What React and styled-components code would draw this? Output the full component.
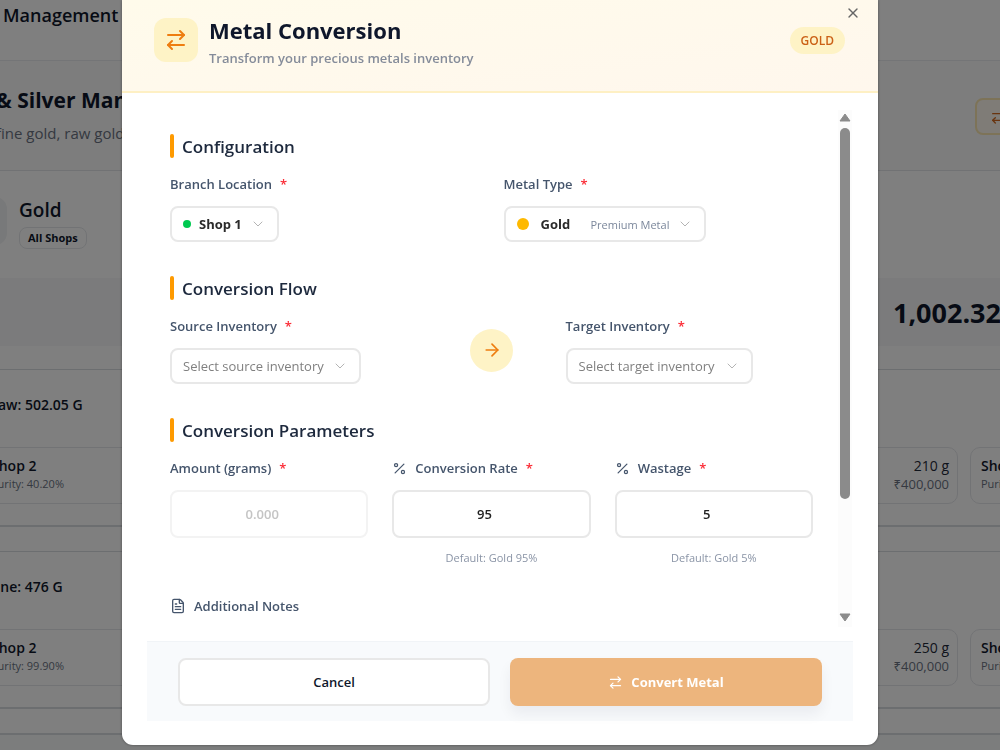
import React from 'react';
import styled, { createGlobalStyle } from 'styled-components';
import {
  ArrowRight,
  ArrowRightLeft,
  ChevronDown,
  FileText,
  Percent,
  X
} from 'lucide-react';

const GlobalStyle = createGlobalStyle`
  * {
    box-sizing: border-box;
  }

  body {
    margin: 0;
    font-family: 'Open Sans', 'Noto Sans', sans-serif;
    color: #0f172b;
    background: #fff;
  }

  h1, h2, h3, h4, p {
    margin: 0;
  }

  button, input, select {
    font-family: inherit;
  }
`;

const Screen = styled.div`
  height: 100vh;
  overflow: hidden;
`;

/* page behind the dialog */

const Page = styled.div`
  margin: 0 -240px 0 -20px;
`;

const TopBar = styled.header`
  height: 61px;
  padding: 2px 23px;
  border-bottom: 1px solid #e9ebee;
`;

const TopTitle = styled.h1`
  font-size: 18px;
  line-height: 26px;
  font-weight: 600;
`;

const Hero = styled.div`
  display: flex;
  justify-content: space-between;
  align-items: center;
  height: 110px;
  padding: 2px 240px 0 16px;
  background: #fafbfb;
  border-bottom: 1px solid #e2e4e8;
`;

const HeroTitle = styled.h2`
  font-size: 21px;
  line-height: 32px;
  font-weight: 700;
`;

const HeroText = styled.p`
  font-size: 15px;
  line-height: 34px;
  color: #6a7282;
  white-space: nowrap;
`;

const HeroButton = styled.button`
  display: flex;
  flex: none;
  align-items: center;
  width: 120px;
  height: 37px;
  margin-right: -95px;
  padding: 0 13px;
  color: #d2691e;
  background: #fef9ee;
  border: 2px solid #fbe7b0;
  border-radius: 8px;
`;

const Metal = styled.div`
  display: flex;
  gap: 12px;
  height: 107px;
  padding-top: 26px;
`;

const MetalIcon = styled.div`
  width: 27px;
  height: 48px;
  background: #f1f2f4;
  border-radius: 12px;
`;

const MetalName = styled.h3`
  font-size: 19px;
  line-height: 26px;
  font-weight: 600;
`;

const Tag = styled.span`
  display: block;
  margin-top: 4px;
  padding: 0 8px;
  font-size: 11px;
  line-height: 20px;
  font-weight: 700;
  border: 1px solid #e5e7eb;
  border-radius: 8px;
`;

const Total = styled.div`
  display: flex;
  align-items: center;
  justify-content: flex-end;
  height: 68px;
  margin-bottom: 23px;
  padding-right: 239px;
  font-size: 27px;
  font-weight: 700;
  background: #f6f7f8;
`;

const Stock = styled.section`
  height: 158px;
  margin-bottom: 24px;
  padding-top: 22px;
  border-top: 1px solid #d9dce0;
  border-bottom: 2px solid #d9dce0;
`;

const StockTitle = styled.h4`
  height: 55px;
  padding-left: 9px;
  font-size: 14px;
  line-height: 26px;
  font-weight: 600;
`;

const Shops = styled.div`
  display: grid;
  grid-template-columns: 1fr 270px;
  gap: 12px;
`;

const Shop = styled.div`
  display: flex;
  justify-content: space-between;
  height: 57px;
  padding: 9px 8px 9px 10px;
  font-size: 11px;
  line-height: 18px;
  color: #6a7282;
  border: 1px solid #e5e7eb;
  border-radius: 10px;
`;

const ShopName = styled.div`
  font-size: 14px;
  font-weight: 600;
  color: #0f172b;
`;

const ShopStock = styled.div`
  font-size: 13px;
  text-align: right;
`;

const Grams = styled.div`
  font-size: 14px;
  color: #1e2939;
`;

const PageEnd = styled.div`
  height: 24px;
  background: #f9fafb;
  border-top: 2px solid #d9dce0;
`;

/* dialog */

const Backdrop = styled.div`
  position: fixed;
  inset: 0;
  background: rgba(0, 0, 0, 0.5);
`;

const Dialog = styled.div`
  width: calc(100% - 32px);
  max-width: 756px;
  margin: 0 auto;
  padding-bottom: 24px;
  background: #fff;
  border-radius: 0 0 11px 11px;
  box-shadow: 0 0 3px rgba(0, 0, 0, 0.4);
`;

const DialogHeader = styled.header`
  position: relative;
  display: flex;
  align-items: flex-start;
  gap: 11px;
  height: 93px;
  padding: 18px 33px 18px 32px;
  background: linear-gradient(to bottom right, #fffbeb, #fff7ed);
  border-bottom: 2px solid #fef0c4;
`;

const IconTile = styled.div`
  display: flex;
  align-items: center;
  justify-content: center;
  width: 44px;
  height: 44px;
  color: #ee7d10;
  background: #fef3c6;
  border-radius: 12px;
`;

const Heading = styled.div`
  flex: 1;
`;

const DialogTitle = styled.h2`
  font-size: 22px;
  line-height: 24px;
  font-weight: 700;
`;

const DialogText = styled.p`
  margin-top: 6px;
  font-size: 13px;
  line-height: 20px;
  font-weight: 600;
  color: #858c9a;
`;

const MetalBadge = styled.span`
  margin-top: 9px;
  padding: 0 11px;
  font-size: 12px;
  line-height: 27px;
  font-weight: 600;
  color: #cb6116;
  background: #fef3c6;
  border-radius: 14px;
`;

const CloseButton = styled.button`
  position: absolute;
  top: 5px;
  right: 17px;
  display: flex;
  padding: 0;
  color: #666;
  background: none;
  border: 0;
`;

const Body = styled.div`
  display: flex;
  margin: 17px 26px 14px 48px;
`;

const Form = styled.form`
  flex: 1;
  padding: 24px 25px 11px 0;
`;

const ScrollBar = styled.div`
  display: flex;
  flex-direction: column;
  align-items: center;
  justify-content: space-between;
  width: 14px;
  padding: 3px 0 5px;
  background: #fcfcfc;
`;

const Thumb = styled.div`
  flex: 1;
  width: 10px;
  margin: 6px 0 114px;
  background: #8b8b8b;
  border-radius: 5px;
`;

const Section = styled.section`
  margin-bottom: ${props => props.$gap || 34}px;
`;

const SectionTitle = styled.h3`
  display: flex;
  align-items: center;
  gap: 8px;
  height: 24px;
  margin-bottom: 16px;
  font-size: 17px;
  font-weight: 600;
  color: #1d293d;

  &::before {
    content: '';
    width: 4px;
    height: 24px;
    background: #fe9a00;
    border-radius: 2px;
  }
`;

const Columns = styled.div`
  display: grid;
  grid-template-columns: ${props => props.$columns};
  gap: 24px;
`;

const Field = styled.div`
  display: flex;
  flex-direction: column;
  align-items: flex-start;
  gap: 12px;
`;

const Label = styled.label`
  display: flex;
  align-items: center;
  gap: 8px;
  font-size: 13px;
  line-height: 20px;
  font-weight: 600;
  color: #45556c;
`;

const Required = styled.span`
  color: #fb2c36;
`;

const SelectBox = styled.div`
  display: flex;
  align-items: center;
  height: 36px;
  padding: 0 11px;
  color: #b4b4b4;
  border: 2px solid #e8e8e8;
  border-radius: 8px;
`;

const Select = styled.select`
  margin-right: 8px;
  padding: 0;
  font-size: 13px;
  font-weight: ${props => (props.$empty ? 400 : 700)};
  color: ${props => (props.$empty ? '#808080' : '#2b2b2b')};
  background: none;
  border: 0;
  appearance: none;
`;

const Dot = styled.span`
  width: ${props => props.$size}px;
  height: ${props => props.$size}px;
  margin-right: ${props => props.$size}px;
  background: ${props => props.$color};
  border-radius: 50%;
`;

const SelectNote = styled.span`
  margin: 0 8px 0 12px;
  font-size: 11px;
  color: #7b879b;
`;

const FlowArrow = styled.div`
  display: flex;
  align-items: center;
  justify-content: center;
  align-self: center;
  justify-self: center;
  width: 43px;
  height: 43px;
  color: #ee7d10;
  background: #fef3c6;
  border-radius: 50%;
`;

const NumberInput = styled.input`
  width: 100%;
  height: 48px;
  padding: 0 26px 0 12px;
  font-size: 13px;
  font-weight: 600;
  text-align: center;
  color: #222;
  background: #fff;
  border: 2px solid #e8e8e8;
  border-radius: 8px;

  &:disabled {
    border-color: #f3f3f3;
  }

  &::placeholder {
    color: #c4c4c4;
  }
`;

const Hint = styled.p`
  align-self: center;
  font-size: 11px;
  line-height: 16px;
  color: #8a94a6;
`;

const Footer = styled.footer`
  display: grid;
  grid-template-columns: 1fr 1fr;
  gap: 20px;
  margin: 0 25px;
  padding: 16px 31px 15px;
  background: #f8fafc;
  border-top: 1px solid #f1f4f7;
`;

const Button = styled.button`
  display: flex;
  align-items: center;
  justify-content: center;
  gap: 8px;
  height: 48px;
  font-size: 13px;
  font-weight: ${props => (props.$primary ? 700 : 600)};
  border-radius: 8px;
  color: ${props => (props.$primary ? '#fff' : '#0f172b')};
  background: ${props => (props.$primary ? '#edb57d' : '#fff')};
  border: ${props => (props.$primary ? '0' : '2px solid #e8e8e8')};
  box-shadow: ${props =>
    props.$primary ? '0 8px 14px rgba(15, 23, 43, 0.06)' : 'none'};
`;

const stocks = [
  { title: 'Raw: 502.05 G', purity: '40.20%', grams: '210 g' },
  { title: 'Fine: 476 G', purity: '99.90%', grams: '250 g' }
];

function FieldLabel({ htmlFor, icon, children, required = true }) {
  return (
    <Label htmlFor={htmlFor}>
      {icon}
      {children}
      {required && <Required>*</Required>}
    </Label>
  );
}

function Chevron() {
  return <ChevronDown size={16} strokeWidth={1.5} />;
}

function Inventory() {
  return (
    <Page>
      <TopBar>
        <TopTitle>Management</TopTitle>
      </TopBar>
      <Hero>
        <div>
          <HeroTitle>&amp; Silver Management</HeroTitle>
          <HeroText>fine gold, raw gold, and silver</HeroText>
        </div>
        <HeroButton aria-label="Convert">
          <ArrowRightLeft size={16} />
        </HeroButton>
      </Hero>
      <Metal>
        <MetalIcon />
        <div>
          <MetalName>Gold</MetalName>
          <Tag>All Shops</Tag>
        </div>
      </Metal>
      <Total>1,002.32</Total>
      {stocks.map(stock => (
        <Stock key={stock.title}>
          <StockTitle>{stock.title}</StockTitle>
          <Shops>
            <Shop>
              <div>
                <ShopName>Shop 2</ShopName>
                Purity: {stock.purity}
              </div>
              <ShopStock>
                <Grams>{stock.grams}</Grams>
                ₹400,000
              </ShopStock>
            </Shop>
            <Shop>
              <div>
                <ShopName>Shop 1</ShopName>
                Purity: {stock.purity}
              </div>
            </Shop>
          </Shops>
        </Stock>
      ))}
      <PageEnd />
    </Page>
  );
}

function ConversionDialog() {
  return (
    <Dialog role="dialog" aria-labelledby="dialog-title">
      <DialogHeader>
        <IconTile>
          <ArrowRightLeft size={24} />
        </IconTile>
        <Heading>
          <DialogTitle id="dialog-title">Metal Conversion</DialogTitle>
          <DialogText>Transform your precious metals inventory</DialogText>
        </Heading>
        <MetalBadge>GOLD</MetalBadge>
        <CloseButton aria-label="Close">
          <X size={16} />
        </CloseButton>
      </DialogHeader>

      <Body>
        <Form>
          <Section>
            <SectionTitle>Configuration</SectionTitle>
            <Columns $columns="1fr 1fr">
              <Field>
                <FieldLabel htmlFor="branch">Branch Location</FieldLabel>
                <SelectBox>
                  <Dot $size={8} $color="#00c950" />
                  <Select id="branch">
                    <option>Shop 1</option>
                  </Select>
                  <Chevron />
                </SelectBox>
              </Field>
              <Field>
                <FieldLabel htmlFor="metal">Metal Type</FieldLabel>
                <SelectBox>
                  <Dot $size={12} $color="#feb900" />
                  <Select id="metal">
                    <option>Gold</option>
                  </Select>
                  <SelectNote>Premium Metal</SelectNote>
                  <Chevron />
                </SelectBox>
              </Field>
            </Columns>
          </Section>

          <Section>
            <SectionTitle>Conversion Flow</SectionTitle>
            <Columns $columns="1fr 100px 1fr">
              <Field>
                <FieldLabel htmlFor="source">Source Inventory</FieldLabel>
                <SelectBox>
                  <Select id="source" $empty>
                    <option>Select source inventory</option>
                  </Select>
                  <Chevron />
                </SelectBox>
              </Field>
              <FlowArrow>
                <ArrowRight size={20} />
              </FlowArrow>
              <Field>
                <FieldLabel htmlFor="target">Target Inventory</FieldLabel>
                <SelectBox>
                  <Select id="target" $empty>
                    <option>Select target inventory</option>
                  </Select>
                  <Chevron />
                </SelectBox>
              </Field>
            </Columns>
          </Section>

          <Section $gap={30}>
            <SectionTitle>Conversion Parameters</SectionTitle>
            <Columns $columns="1fr 1fr 1fr">
              <Field>
                <FieldLabel htmlFor="amount">Amount (grams)</FieldLabel>
                <NumberInput id="amount" placeholder="0.000" disabled />
              </Field>
              <Field>
                <FieldLabel htmlFor="rate" icon={<Percent size={15} />}>
                  Conversion Rate
                </FieldLabel>
                <NumberInput id="rate" defaultValue="95" />
                <Hint>Default: Gold 95%</Hint>
              </Field>
              <Field>
                <FieldLabel htmlFor="wastage" icon={<Percent size={15} />}>
                  Wastage
                </FieldLabel>
                <NumberInput id="wastage" defaultValue="5" />
                <Hint>Default: Gold 5%</Hint>
              </Field>
            </Columns>
          </Section>

          <FieldLabel icon={<FileText size={16} />} required={false}>
            Additional Notes
          </FieldLabel>
        </Form>

        <ScrollBar aria-hidden="true">
          <svg width="12" height="9" viewBox="0 0 12 9">
            <path d="M6 1 11 8H1Z" fill="#8b8b8b" stroke="#8b8b8b" strokeLinejoin="round" />
          </svg>
          <Thumb />
          <svg width="12" height="9" viewBox="0 0 12 9">
            <path d="M6 8 1 1h10Z" fill="#8b8b8b" stroke="#8b8b8b" strokeLinejoin="round" />
          </svg>
        </ScrollBar>
      </Body>

      <Footer>
        <Button>Cancel</Button>
        <Button $primary>
          <ArrowRightLeft size={15} />
          Convert Metal
        </Button>
      </Footer>
    </Dialog>
  );
}

export default function App() {
  return (
    <Screen>
      <GlobalStyle />
      <Inventory />
      <Backdrop>
        <ConversionDialog />
      </Backdrop>
    </Screen>
  );
}
